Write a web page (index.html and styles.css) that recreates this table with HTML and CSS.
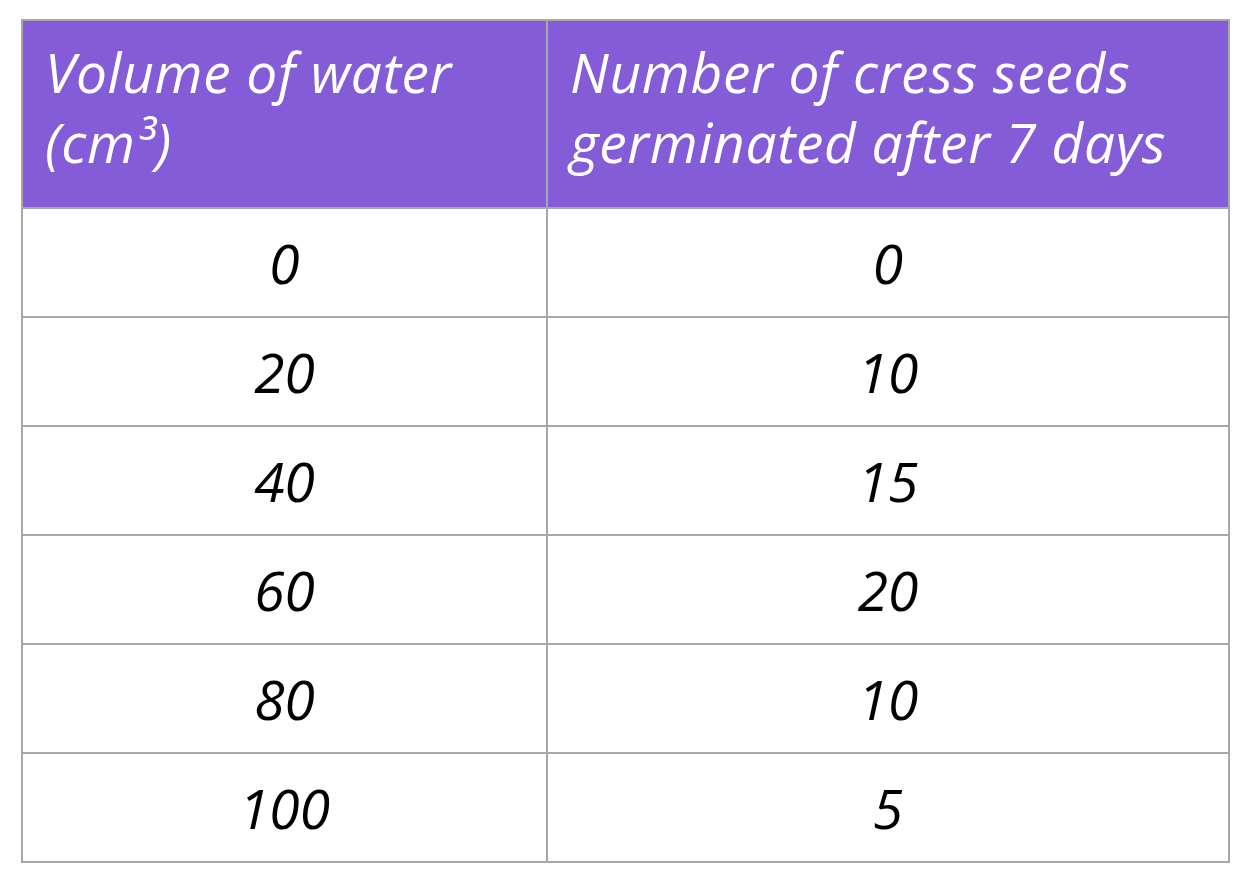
FILE: index.html
```html
<!DOCTYPE html>
<html>
<head>
<meta charset="utf-8">
<link rel="stylesheet" href="styles.css">
</head>
<body>
<div class="page">
  <table class="data">
    <colgroup><col class="c1"><col class="c2"></colgroup>
    <thead>
      <tr><th>Volume of water (cm³)</th><th>Number of cress seeds germinated after 7 days</th></tr>
    </thead>
    <tbody>
      <tr><td>0</td><td>0</td></tr>
      <tr><td>20</td><td>10</td></tr>
      <tr><td>40</td><td>15</td></tr>
      <tr><td>60</td><td>20</td></tr>
      <tr><td>80</td><td>10</td></tr>
      <tr><td>100</td><td>5</td></tr>
    </tbody>
  </table>
</div>
</body>
</html>
```
FILE: styles.css
```css
html, body { margin: 0; padding: 0; background: #ffffff; }
.page { padding: 19px 0 0 21px; }
.data {
  width: 1207px;
  table-layout: fixed;
  border-collapse: collapse;
  font-family: "Open Sans", "DejaVu Sans", sans-serif;
  font-style: italic;
}
.c1 { width: 525px; }
.c2 { width: 682px; }
.data th, .data td { border: 2px solid #a8a8a8; }
.data th {
  background: #855cd7;
  color: #ffffff;
  font-weight: 400;
  font-size: 55px;
  line-height: 70px;
  text-align: left;
  vertical-align: top;
  height: 188px;
  padding: 16px 12px 0 22px;
  box-sizing: border-box;
  letter-spacing: 0.7px;
}
.data td {
  height: 109px;
  box-sizing: border-box;
  text-align: center;
  vertical-align: middle;
  font-size: 55px;
  color: #000000;
  padding: 0;
}
```
